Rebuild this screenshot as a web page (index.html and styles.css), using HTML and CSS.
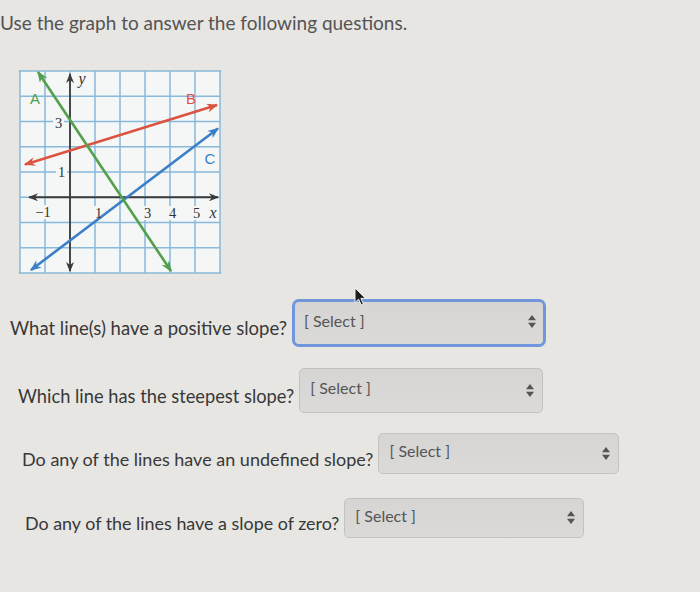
FILE: index.html
```html
<!DOCTYPE html>
<html lang="en">
<head>
<meta charset="utf-8">
<title>Slope questions</title>
<link rel="stylesheet" href="styles.css">
</head>
<body>
<main class="page">
  <h1 class="title">Use the graph to answer the following questions.</h1>

  <svg class="graph" viewBox="0 0 204 206" width="204" height="206" aria-label="Graph of lines A, B and C">
    <defs>
      <marker id="ah-k" viewBox="0 0 10 8" refX="9" refY="4" markerWidth="10" markerHeight="8" markerUnits="userSpaceOnUse" orient="auto-start-reverse"><path d="M0,0 L10,4 L0,8 L3,4 Z" fill="#3a3a3a"/></marker>
      <marker id="ah-g" viewBox="0 0 10 8" refX="9" refY="4" markerWidth="12" markerHeight="9" markerUnits="userSpaceOnUse" orient="auto-start-reverse"><path d="M0,0 L10,4 L0,8 L3,4 Z" fill="#52a04c"/></marker>
      <marker id="ah-r" viewBox="0 0 10 8" refX="9" refY="4" markerWidth="12" markerHeight="9" markerUnits="userSpaceOnUse" orient="auto-start-reverse"><path d="M0,0 L10,4 L0,8 L3,4 Z" fill="#dc5440"/></marker>
      <marker id="ah-b" viewBox="0 0 10 8" refX="9" refY="4" markerWidth="12" markerHeight="9" markerUnits="userSpaceOnUse" orient="auto-start-reverse"><path d="M0,0 L10,4 L0,8 L3,4 Z" fill="#3c7fc8"/></marker>
    </defs>
    <rect x="2" y="2" width="200" height="202" fill="#f5f7f7"/>
    <g class="grid" stroke="#88b9da" stroke-width="1.5">
      <line x1="2" y1="1" x2="2" y2="205"/>
      <line x1="27" y1="2" x2="27" y2="204"/>
      <line x1="52" y1="2" x2="52" y2="204"/>
      <line x1="77" y1="2" x2="77" y2="204"/>
      <line x1="102" y1="2" x2="102" y2="204"/>
      <line x1="127" y1="2" x2="127" y2="204"/>
      <line x1="152" y1="2" x2="152" y2="204"/>
      <line x1="177" y1="2" x2="177" y2="204"/>
      <line x1="202" y1="1" x2="202" y2="205"/>
      <line x1="1" y1="2" x2="203" y2="2"/>
      <line x1="2" y1="27.25" x2="202" y2="27.25"/>
      <line x1="2" y1="52.5" x2="202" y2="52.5"/>
      <line x1="2" y1="77.75" x2="202" y2="77.75"/>
      <line x1="2" y1="103" x2="202" y2="103"/>
      <line x1="2" y1="128.25" x2="202" y2="128.25"/>
      <line x1="2" y1="153.5" x2="202" y2="153.5"/>
      <line x1="2" y1="178.75" x2="202" y2="178.75"/>
      <line x1="1" y1="204" x2="203" y2="204"/>
    </g>
    <g class="labelbg" fill="#f5f7f7">
      <rect x="35" y="46" width="11" height="14"/>
      <rect x="38" y="95" width="11" height="14"/>
      <rect x="15" y="136" width="20" height="14"/>
      <rect x="75" y="137" width="11" height="14"/>
      <rect x="124" y="137" width="11" height="14"/>
      <rect x="149" y="137" width="11" height="14"/>
      <rect x="173" y="137" width="11" height="14"/>
    </g>
    <line x1="11" y1="128.25" x2="200" y2="128.25" stroke="#3a3a3a" stroke-width="1.8" marker-start="url(#ah-k)" marker-end="url(#ah-k)"/>
    <line x1="52" y1="5" x2="52" y2="202" stroke="#3a3a3a" stroke-width="1.8" marker-start="url(#ah-k)" marker-end="url(#ah-k)"/>
    <line x1="7" y1="95.5" x2="199" y2="36" stroke="#dc5440" stroke-width="2.6" marker-start="url(#ah-r)" marker-end="url(#ah-r)"/>
    <line x1="13" y1="201" x2="200" y2="59.5" stroke="#3c7fc8" stroke-width="2.6" marker-start="url(#ah-b)" marker-end="url(#ah-b)"/>
    <line x1="20" y1="3" x2="153" y2="202" stroke="#52a04c" stroke-width="2.6" marker-start="url(#ah-g)" marker-end="url(#ah-g)"/>
    <g class="ticks">
      <text x="40.5" y="59">3</text>
      <text x="43.5" y="108">1</text>
      <text x="25" y="148">−1</text>
      <text x="80.5" y="149">1</text>
      <text x="129.5" y="149">3</text>
      <text x="154.5" y="149">4</text>
      <text x="178.5" y="149">5</text>
      <text class="var" x="195" y="149">x</text>
      <text class="var" x="64" y="15">y</text>
    </g>
    <text class="name name-a" x="17" y="35">A</text>
    <text class="name name-b" x="173" y="35">B</text>
    <text class="name name-c" x="192" y="95">C</text>
  </svg>

  <div class="questions">
    <div class="row row-1">
      <span class="q">What line(s) have a positive slope?</span>
      <div class="select select-focus">
        <select aria-label="What line(s) have a positive slope?"><option>[ Select ]</option></select>
        <svg class="caret" viewBox="0 0 8 13" width="8" height="13"><path d="M0,5.2 L4,0 L8,5.2 Z M0,7.8 L4,13 L8,7.8 Z"/></svg>
      </div>
    </div>
    <div class="row row-2">
      <span class="q">Which line has the steepest slope?</span>
      <div class="select">
        <select aria-label="Which line has the steepest slope?"><option>[ Select ]</option></select>
        <svg class="caret" viewBox="0 0 8 13" width="8" height="13"><path d="M0,5.2 L4,0 L8,5.2 Z M0,7.8 L4,13 L8,7.8 Z"/></svg>
      </div>
    </div>
    <div class="row row-3">
      <span class="q">Do any of the lines have an undefined slope?</span>
      <div class="select">
        <select aria-label="Do any of the lines have an undefined slope?"><option>[ Select ]</option></select>
        <svg class="caret" viewBox="0 0 8 13" width="8" height="13"><path d="M0,5.2 L4,0 L8,5.2 Z M0,7.8 L4,13 L8,7.8 Z"/></svg>
      </div>
    </div>
    <div class="row row-4">
      <span class="q">Do any of the lines have a slope of zero?</span>
      <div class="select">
        <select aria-label="Do any of the lines have a slope of zero?"><option>[ Select ]</option></select>
        <svg class="caret" viewBox="0 0 8 13" width="8" height="13"><path d="M0,5.2 L4,0 L8,5.2 Z M0,7.8 L4,13 L8,7.8 Z"/></svg>
      </div>
    </div>
  </div>

  <svg class="cursor" viewBox="0 0 13 20" width="13" height="20" aria-hidden="true">
    <path d="M1,1 L1,15.5 L4.6,12.2 L7.2,18 L9.4,17 L6.9,11.4 L11.6,11.4 Z" fill="#1c1c1c" stroke="#f4f4f4" stroke-width="1"/>
  </svg>
</main>
</body>
</html>
```

FILE: styles.css
```css
html, body {
  margin: 0;
  padding: 0;
}

body {
  background: #e7e6e3;
  font-family: Lato, "Open Sans", "Liberation Sans", sans-serif;
  width: 700px;
  height: 592px;
  overflow: hidden;
}

.page {
  position: relative;
  padding-top: 11px;
}

.title {
  margin: 0;
  font-size: 19px;
  line-height: 24px;
  font-weight: 400;
  color: #545454;
  white-space: nowrap;
}

.graph {
  display: block;
  margin: 34px 0 0 18px;
}

.ticks text {
  font-family: "Liberation Serif", "DejaVu Serif", serif;
  font-size: 14.5px;
  fill: #333;
  text-anchor: middle;
}

.ticks .var {
  font-style: italic;
  font-size: 16px;
}

.name {
  font-family: "Liberation Sans", Arial, sans-serif;
  font-size: 15px;
  text-anchor: middle;
}

.name-a { fill: #52a04c; }
.name-b { fill: #dc5440; }
.name-c { fill: #3c7fc8; }

.questions {
  display: flex;
  flex-direction: column;
  margin-top: 24px;
}

.row {
  display: flex;
  align-items: center;
  gap: 5px;
}

.q {
  font-size: 18px;
  color: #383838;
  white-space: nowrap;
  padding-top: 10px;
}

.row-1 { padding-left: 10px; height: 48px; }
.row-2 { padding-left: 18px; height: 45px; margin-top: 21px; }
.row-3 { padding-left: 22px; height: 41px; margin-top: 20px; }
.row-4 { padding-left: 25px; height: 40px; margin-top: 24px; }

.row-1 .q { font-size: 18.5px; }
.row-2 .q { font-size: 18.3px; }
.row-4 .q { font-size: 17.9px; }

.select {
  position: relative;
  box-sizing: border-box;
  height: 100%;
  background: linear-gradient(#d6d5d3, #dbdad8);
  border: 1px solid #c3c2bf;
  border-radius: 5px;
}

.row-1 .select { width: 254px; }
.row-2 .select { width: 244px; }
.row-3 .select { width: 241px; }
.row-4 .select { width: 240px; }

.select-focus {
  border: 3px solid #7196dc;
  border-radius: 7px;
}

.select select {
  appearance: none;
  -webkit-appearance: none;
  display: block;
  width: 100%;
  height: 100%;
  margin: 0;
  border: 0;
  background: transparent;
  font-family: Lato, "Open Sans", "Liberation Sans", sans-serif;
  font-size: 16px;
  color: #555;
  padding: 0 0 6px 10px;
  outline: none;
}

.select-focus select {
  padding-left: 9px;
}

.caret {
  position: absolute;
  right: 8px;
  top: 50%;
  margin-top: -7px;
  fill: #555;
}

.select-focus .caret {
  right: 7px;
  margin-top: -8px;
}

.cursor {
  position: absolute;
  left: 354px;
  top: 287px;
}
```
